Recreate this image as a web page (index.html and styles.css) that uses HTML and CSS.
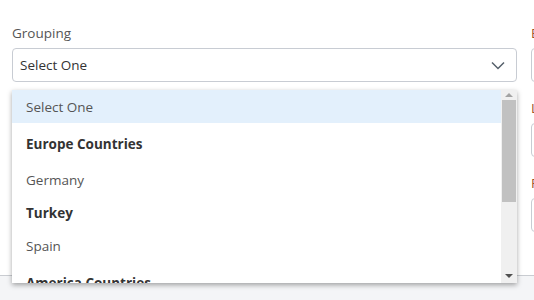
FILE: index.html
```html
<!DOCTYPE html>
<html lang="en">
<head>
<meta charset="UTF-8">
<title>Grouping select</title>
<link rel="stylesheet" href="styles.css">
</head>
<body>

<div class="page">
    <form class="form">
        <div class="col">
            <div class="field">
                <label class="label">Grouping</label>
                <div class="select">
                    <span>Select One</span>
                    <svg class="chevron" width="14" height="9" viewBox="0 0 14 9">
                        <path d="M1 1.5 L7 7.5 L13 1.5" fill="none" stroke="#56606b" stroke-width="1.5"/>
                    </svg>
                </div>
            </div>
        </div>
        <div class="col side">
            <div class="field">
                <label class="label req">Email</label>
                <div class="input"></div>
            </div>
            <div class="field">
                <label class="label req">Last Name</label>
                <div class="input"></div>
            </div>
            <div class="field">
                <label class="label req">First Name</label>
                <div class="input"></div>
            </div>
        </div>
    </form>

    <!-- open dropdown list -->
    <div class="dropdown">
        <ul class="options">
            <li class="opt active">Select One</li>
            <li class="group">Europe Countries</li>
            <li class="opt">Germany</li>
            <li class="opt strong">Turkey</li>
            <li class="opt">Spain</li>
            <li class="group">America Countries</li>
            <li class="opt">Brazil</li>
        </ul>
        <div class="scrollbar">
            <div class="arrow up"></div>
            <div class="track"><div class="thumb"></div></div>
            <div class="arrow down"></div>
        </div>
    </div>
</div>

<div class="footer"></div>

</body>
</html>
```

FILE: styles.css
```css
html, body {
    overflow: hidden;
}
body {
    margin: 0;
    font-family: 'Open Sans', 'Noto Sans', sans-serif;
    font-size: 13px;
    color: #333;
    background: #f4f5f7;
}
.page {
    position: relative;
    background: #fff;
    height: 275px;
    border-bottom: 1px solid #c9ccd1;
}
.form {
    display: grid;
    grid-template-columns: 505px 1fr;
    column-gap: 14px;
    padding: 23px 0 0 12px;
}
.side {
    overflow: hidden;
}
.side .input {
    width: 200px;
}
.field {
    margin-bottom: 16px;
}
.label {
    display: block;
    height: 20px;
    line-height: 20px;
    margin-bottom: 5px;
    color: #555;
    font-size: 13.5px;
    white-space: nowrap;
}
.label.req {
    color: #a0522d;
}
.select, .input {
    box-sizing: border-box;
    height: 34px;
    border: 1px solid #c8ccd3;
    border-radius: 4px;
    background: #fff;
}
.select {
    display: flex;
    align-items: center;
    justify-content: space-between;
    padding: 0 11px 0 7px;
    font-size: 13.5px;
    color: #333;
}
.chevron {
    display: block;
}

/* Dropdown */
.dropdown {
    position: absolute;
    z-index: 10;
    top: 90px;
    left: 12px;
    width: 505px;
    height: 193px;
    display: flex;
    background: #fff;
    box-shadow: 0 2px 5px rgba(0,0,0,0.35);
}
.options {
    flex: 1;
    list-style: none;
    margin: 0;
    padding: 0;
    overflow: hidden;
}
.options li {
    padding: 0 14px;
    font-size: 13.5px;
}
.opt {
    height: 33px;
    line-height: 35px;
    color: #555;
}
.opt.active {
    background: #e3f0fc;
}
.opt.strong, .group {
    font-weight: 700;
    color: #333;
}
.group {
    height: 40px;
    line-height: 42px;
}
.scrollbar {
    width: 16px;
    display: flex;
    flex-direction: column;
    background: #f0f0f0;
}
.arrow {
    height: 10px;
    display: flex;
    align-items: center;
    justify-content: center;
}
.arrow::before {
    content: "";
    border-left: 4px solid transparent;
    border-right: 4px solid transparent;
}
.arrow.up::before {
    border-bottom: 4px solid #a3a3a3;
}
.arrow.down {
    margin-top: auto;
    height: 14px;
}
.arrow.down::before {
    border-top: 4px solid #505050;
}
.track {
    flex: 1;
    padding: 0 1px;
}
.thumb {
    height: 102px;
    background: #c1c1c1;
}
.footer {
    height: 24px;
}
```
